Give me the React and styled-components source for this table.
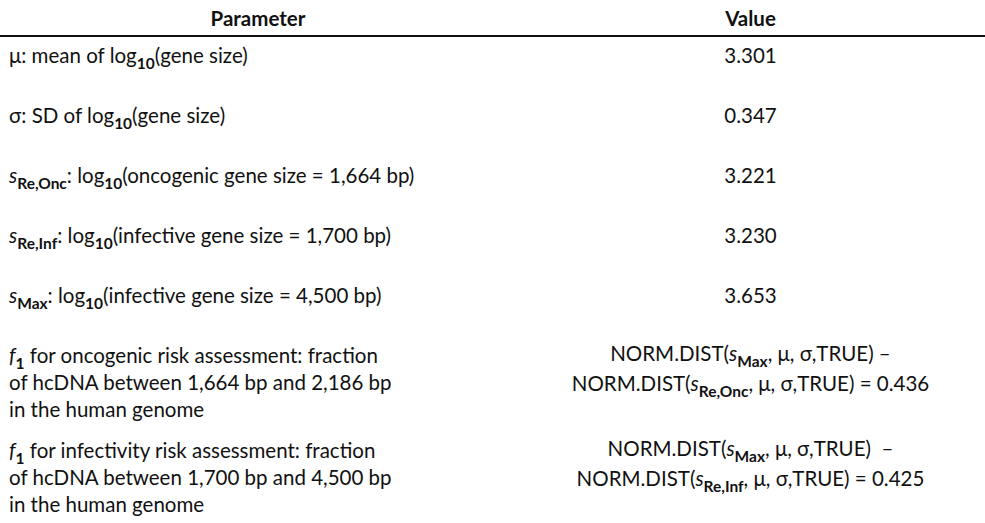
import React from 'react'
import styled, { createGlobalStyle } from 'styled-components'

const GlobalStyle = createGlobalStyle`
  html, body {
    margin: 0;
    padding: 0;
    background: #ffffff;
  }
  body {
    font-family: Lato, "Open Sans", sans-serif;
    color: #111111;
  }
`

const Table = styled.div`
  width: 985px;
  display: flex;
  flex-direction: column;
  font-size: 20.5px;
  line-height: 27px;
`

const HeaderRow = styled.div`
  display: grid;
  grid-template-columns: 516px 1fr;
  height: 35px;
  align-items: center;
  border-bottom: 2px solid #111;
  font-weight: 700;
`

const HeadCell = styled.div`
  text-align: center;
  padding-top: 2px;
`

const Row = styled.div`
  display: grid;
  grid-template-columns: 516px 1fr;
  box-sizing: border-box;
  min-height: 60px;
  padding: 5px 0 9px;
`

const ParamCell = styled.div`
  padding-left: 9px;
`

const ValueCell = styled.div`
  text-align: center;
  line-height: ${p => (p.tall ? '30px' : '27px')};
  margin-top: ${p => (p.tall ? '-4px' : '0')};
`

const Sub = styled.sub`
  font-size: 15.5px;
  font-weight: 700;
  vertical-align: -6px;
  line-height: 0;
`

const Var = styled.i`
  font-style: italic;
`

const S = ({ sub }) => (
  <>
    <Var>s</Var>
    <Sub>{sub}</Sub>
  </>
)

const Log = () => (
  <>
    log<Sub>10</Sub>
  </>
)

const rows = [
  {
    param: <>μ: mean of <Log />(gene size)</>,
    value: '3.301',
  },
  {
    param: <>σ: SD of <Log />(gene size)</>,
    value: '0.347',
  },
  {
    param: <><S sub="Re,Onc" />: <Log />(oncogenic gene size = 1,664 bp)</>,
    value: '3.221',
  },
  {
    param: <><S sub="Re,Inf" />: <Log />(infective gene size = 1,700 bp)</>,
    value: '3.230',
  },
  {
    param: <><S sub="Max" />: <Log />(infective gene size = 4,500 bp)</>,
    value: '3.653',
  },
  {
    param: (
      <>
        <Var>f</Var><Sub>1</Sub> for oncogenic risk assessment: fraction<br />
        of hcDNA between 1,664 bp and 2,186 bp<br />
        in the human genome
      </>
    ),
    tall: true,
    value: (
      <>
        NORM.DIST(<S sub="Max" />, μ, σ,TRUE) –<br />
        NORM.DIST(<S sub="Re,Onc" />, μ, σ,TRUE) = 0.436
      </>
    ),
  },
  {
    param: (
      <>
        <Var>f</Var><Sub>1</Sub> for infectivity risk assessment: fraction<br />
        of hcDNA between 1,700 bp and 4,500 bp<br />
        in the human genome
      </>
    ),
    tall: true,
    value: (
      <>
        NORM.DIST(<S sub="Max" />, μ, σ,TRUE)&nbsp; –<br />
        NORM.DIST(<S sub="Re,Inf" />, μ, σ,TRUE) = 0.425
      </>
    ),
  },
]

export default function App() {
  return (
    <>
      <GlobalStyle />
      <Table>
        <HeaderRow>
          <HeadCell>Parameter</HeadCell>
          <HeadCell>Value</HeadCell>
        </HeaderRow>
        {rows.map((r, i) => (
          <Row key={i}>
            <ParamCell>{r.param}</ParamCell>
            <ValueCell tall={r.tall}>{r.value}</ValueCell>
          </Row>
        ))}
      </Table>
    </>
  )
}
